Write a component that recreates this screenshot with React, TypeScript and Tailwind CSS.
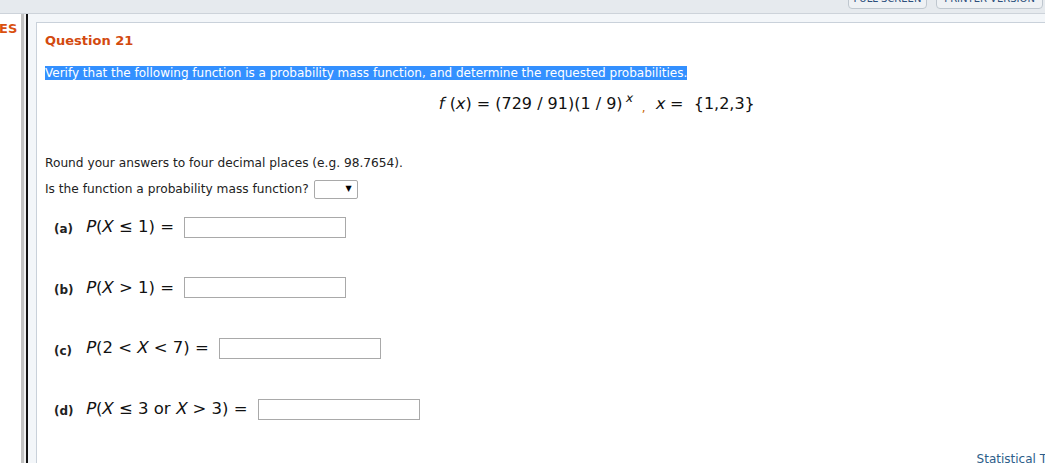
import React from 'react'

const font = { fontFamily: '"DejaVu Sans", Verdana, sans-serif' }

// slanted letter for math variables (no oblique face is available)
const It = ({ children }: { children: React.ReactNode }) => (
  <span className="inline-block -skew-x-[12deg]">{children}</span>
)

const Part = ({ label, expr, className }: { label: string; expr: React.ReactNode; className?: string }) => (
  <div className={'flex items-center ' + (className ?? '')}>
    <span className="text-[12px] font-bold text-[#222] w-[41px] pl-[9px] pt-[4px]">{label}</span>
    <span className="text-[16.5px] text-[#111] whitespace-nowrap">{expr}</span>
    <div className="ml-[10px] w-[162px] h-[21px] border border-[#a9a9a9] bg-white" />
  </div>
)

const App = () => {
  return (
    <div className="w-[1045px] h-[463px] overflow-hidden bg-white flex flex-col" style={font}>
      {/* top strip with clipped buttons */}
      <div className="h-[14px] shrink-0 bg-[#e6eaee] border-b border-[#cdd3da] flex justify-end gap-[9px] pr-[2px] overflow-hidden">
        <div className="-mt-[10px] h-[19px] w-[79px] rounded-[4px] border border-[#bfc7cf] bg-[#eef1f4] text-[10px] text-[#2c4f7c] flex items-end justify-center pb-[2px]">FULL SCREEN</div>
        <div className="-mt-[10px] h-[19px] w-[107px] rounded-[4px] border border-[#bfc7cf] bg-[#eef1f4] text-[10px] text-[#2c4f7c] flex items-end justify-center pb-[2px]">PRINTER VERSION</div>
      </div>

      <div className="flex flex-1 min-h-0">
        <div className="w-[21px] shrink-0 overflow-hidden">
          <div className="text-[13px] font-bold text-[#d9500f] pt-[5px] -ml-[1px]">ES</div>
        </div>
        <div className="w-[3px] bg-[#c2c2c2]" />
        <div className="w-[2px] bg-[#f0f0f0]" />
        <div className="w-[2px] bg-[#111]" />
        <div className="flex-1 bg-[#f3f6f9] pt-[8px] pl-[8px] flex">
          <div className="flex-1 bg-white border-t border-l border-[#c9d1da] pl-[8px] pt-[8px] relative">
            <div className="text-[13px] font-bold text-[#d34a0f]">Question 21</div>

            <div className="mt-[9px]">
              <span className="bg-[#3390ff] text-white text-[12px] leading-[16px]">
                Verify that the following function is a probability mass function, and determine the requested probabilities.
              </span>
            </div>

            <div className="mt-[8px] pl-[394px] text-[16px] text-[#111] whitespace-nowrap flex items-baseline">
              <span><It>f</It> (<It>x</It>) = (729 / 91)(1 / 9)</span>
              <span className="text-[12px] relative -top-[7px] ml-[3px]"><It>x</It></span>
              <span className="ml-[9px] text-[12px] text-[#c86400] relative top-[3px]">,</span>
              <span className="ml-[10px]"><It>x</It> = &nbsp;{'{'}1,2,3{'}'}</span>
            </div>

            <div className="mt-[38px] text-[12.2px] text-[#222]">Round your answers to four decimal places (e.g. 98.7654).</div>

            <div className="mt-[8px] flex items-center text-[12.2px] text-[#222]">
              <span>Is the function a probability mass function?</span>
              <div className="ml-[5px] w-[44px] h-[19px] border border-[#a9a9a9] rounded-[2px] bg-white flex items-center justify-end pr-[5px]">
                <span className="text-[8px] text-black">▼</span>
              </div>
            </div>

            <Part className="mt-[16px]" label="(a)" expr={<><It>P</It>(<It>X</It> ≤ 1) =</>} />
            <Part className="mt-[36px]" label="(b)" expr={<><It>P</It>(<It>X</It> &gt; 1) =</>} />
            <Part className="mt-[36px]" label="(c)" expr={<><It>P</It>(2 &lt; <It>X</It> &lt; 7) =</>} />
            <Part className="mt-[36px]" label="(d)" expr={<><It>P</It>(<It>X</It> ≤ 3 or <It>X</It> &gt; 3) =</>} />

            <div className="absolute right-[-2px] bottom-[-5px] text-[12px] text-[#2d5d8a] whitespace-nowrap">Statistical T</div>
          </div>
        </div>
      </div>
    </div>
  )
}

export default App
